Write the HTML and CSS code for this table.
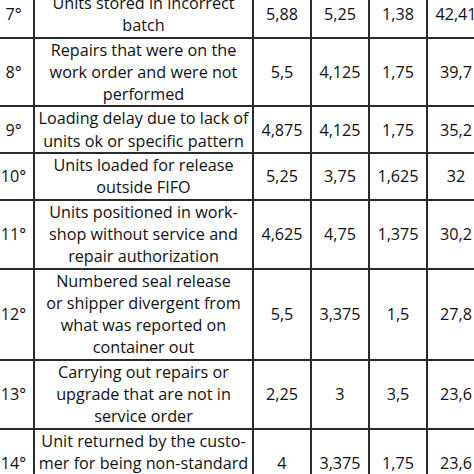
FILE: index.html
```html
<!DOCTYPE html>
<html>
<head>
<meta charset="utf-8">
<link rel="stylesheet" href="styles.css">
</head>
<body>
<table class="grid">
  <colgroup>
    <col class="c-rank"><col class="c-desc"><col class="c-num"><col class="c-num"><col class="c-num"><col class="c-num">
  </colgroup>
  <tbody>
    <tr><td>7°</td><td class="desc">Units stored in incorrect<br>batch</td><td>5,88</td><td>5,25</td><td>1,38</td><td>42,41</td></tr>
    <tr><td>8°</td><td class="desc">Repairs that were on the<br>work order and were not<br>performed</td><td>5,5</td><td>4,125</td><td>1,75</td><td>39,7</td></tr>
    <tr><td>9°</td><td class="desc">Loading delay due to lack of<br>units ok or specific pattern</td><td>4,875</td><td>4,125</td><td>1,75</td><td>35,2</td></tr>
    <tr><td>10°</td><td class="desc">Units loaded for release<br>outside FIFO</td><td>5,25</td><td>3,75</td><td>1,625</td><td>32</td></tr>
    <tr><td>11°</td><td class="desc">Units positioned in work-<br>shop without service and<br>repair authorization</td><td>4,625</td><td>4,75</td><td>1,375</td><td>30,2</td></tr>
    <tr><td>12°</td><td class="desc">Numbered seal release<br>or shipper divergent from<br>what was reported on<br>container out</td><td>5,5</td><td>3,375</td><td>1,5</td><td>27,8</td></tr>
    <tr><td>13°</td><td class="desc">Carrying out repairs or<br>upgrade that are not in<br>service order</td><td>2,25</td><td>3</td><td>3,5</td><td>23,6</td></tr>
    <tr><td>14°</td><td class="desc">Unit returned by the custo-<br>mer for being non-standard<br>pattern</td><td>4</td><td>3,375</td><td>1,75</td><td>23,6</td></tr>
  </tbody>
</table>
</body>
</html>
```
FILE: styles.css
```css
html, body {
  margin: 0;
  padding: 0;
  background: #ffffff;
  overflow: hidden;
}
.grid {
  border-collapse: collapse;
  table-layout: fixed;
  width: 493px;
  margin-top: -10px;
  margin-left: -8px;
  font-family: "Open Sans", "Liberation Sans", sans-serif;
  font-size: 16.2px;
  line-height: 22.3px;
  color: #111111;
}
.c-rank { width: 41px; }
.c-desc { width: 219px; }
.c-num { width: 58px; }
.grid td {
  border: 2px solid #2a2a2a;
  padding: 0;
  text-align: center;
  vertical-align: middle;
  white-space: nowrap;
  overflow: hidden;
}
```
